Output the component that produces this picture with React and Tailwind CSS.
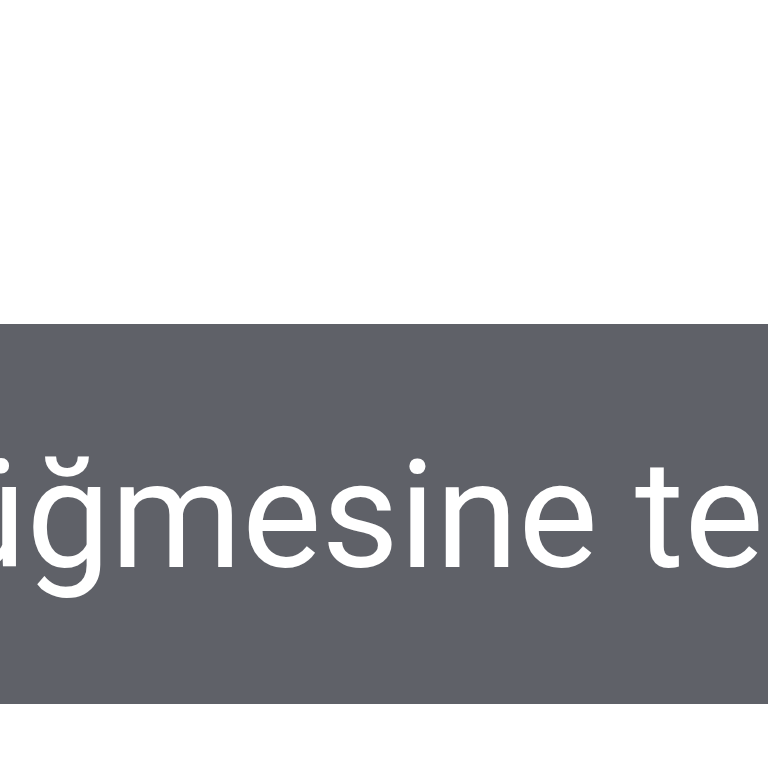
export default function App() {
  return (
    <div className="w-[768px] h-[768px] bg-white overflow-hidden flex flex-col" style={{ fontFamily: 'Roboto, "Liberation Sans", sans-serif' }}>
      <div className="h-[324px] shrink-0 bg-white" />
      <div className="h-[380px] shrink-0 bg-[#5f6168] flex items-center overflow-hidden">
        <span className="whitespace-nowrap text-white text-[150px] leading-none ml-[-141px] mt-[4px]">
          düğmesine tekrar dokunun
        </span>
      </div>
      <div className="flex-1 bg-white" />
    </div>
  );
}
